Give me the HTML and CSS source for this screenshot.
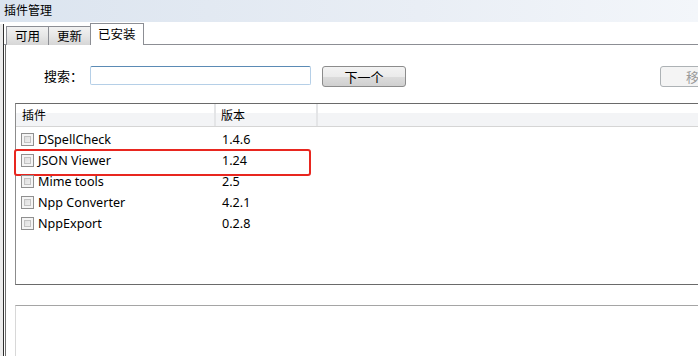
FILE: index.html
```html
<!DOCTYPE html>
<html>
<head>
  <meta charset="utf-8">
  <title>插件管理</title>
  <link rel="stylesheet" href="styles.css">
</head>
<body>
  <div class="titlebar">插件管理</div>

  <div class="dialog">
    <div class="tabctl">
      <div class="tabs">
        <div class="tab">可用</div>
        <div class="tab">更新</div>
        <div class="tab active">已安装</div>
      </div>

      <div class="page">
        <div class="search-row">
          <label class="search-label" for="search">搜索：</label>
          <input type="text" id="search" class="search-input">
          <button class="btn">下一个</button>
          <button class="btn disabled">移除</button>
        </div>

        <div class="listview">
          <div class="list-head">
            <div class="col-name">插件</div>
            <div class="col-ver">版本</div>
            <div class="col-rest"></div>
          </div>
          <ul class="rows">
            <li class="row"><span class="col-name"><span class="check"></span>DSpellCheck</span><span class="col-ver">1.4.6</span></li>
            <li class="row marked"><span class="col-name"><span class="check"></span>JSON Viewer</span><span class="col-ver">1.24</span></li>
            <li class="row"><span class="col-name"><span class="check"></span>Mime tools</span><span class="col-ver">2.5</span></li>
            <li class="row"><span class="col-name"><span class="check"></span>Npp Converter</span><span class="col-ver">4.2.1</span></li>
            <li class="row"><span class="col-name"><span class="check"></span>NppExport</span><span class="col-ver">0.2.8</span></li>
          </ul>
        </div>

        <div class="details"></div>
      </div>
    </div>
  </div>
</body>
</html>
```

FILE: styles.css
```css
* {
  margin: 0;
  padding: 0;
  box-sizing: border-box;
}

body {
  width: 698px;
  height: 356px;
  overflow: hidden;
  background: #fff;
  font-family: "Noto Sans", "Noto Sans CJK SC", sans-serif;
  font-size: 12px;
  color: #000;
}

.titlebar {
  height: 22px;
  line-height: 20px;
  padding-left: 4px;
  background: linear-gradient(to right, #dbe4ef, #e9eef5 60%, #f3f6fa);
  font-family: "Noto Sans CJK SC", sans-serif;
}

.dialog {
  width: 780px;
  margin-top: 2px;
  border-left: 3px solid #ececec;
}

.tabctl {
  border-left: 1px solid #2e2e2e;
}

/* tab strip */
.tabs {
  display: flex;
  align-items: flex-end;
  height: 21px;
  padding-left: 2px;
  border-bottom: 1px solid #8c8e94;
  font-family: "Noto Sans CJK SC", sans-serif;
}

.tab {
  height: 19px;
  line-height: 18px;
  padding: 0 8px;
  margin-bottom: -1px;
  border: 1px solid #8c8e94;
  border-bottom: none;
  background: linear-gradient(#f2f2f2, #e6e6e6 50%, #d6d6d6);
  font-size: 12.5px;
}

.tab + .tab {
  margin-left: -1px;
}

.tab.active {
  height: 22px;
  line-height: 20px;
  padding: 0 7px;
  background: #fff;
}

.page {
  margin-left: 1px;
  border-left: 1px solid #6e6e6e;
  padding-left: 9px;
  height: 320px;
}

/* search */
.search-row {
  display: flex;
  align-items: flex-start;
  padding-top: 21px;
  height: 58px;
}

.search-label {
  margin-left: 29px;
  margin-top: 1px;
  width: 46px;
  font-family: "Noto Sans CJK SC", sans-serif;
  font-size: 13px;
  line-height: 17px;
}

.search-input {
  width: 221px;
  height: 19px;
  border: 1px solid #b5cfe7;
  border-top-color: #5b8bb5;
  border-radius: 2px;
  outline: none;
}

.btn {
  height: 21px;
  width: 84px;
  margin-left: 11px;
  border: 1px solid #8c8c8c;
  border-radius: 3px;
  background: linear-gradient(#f3f3f3, #ebebeb 50%, #dcdcdc 51%, #d0d0d0);
  font-family: "Noto Sans CJK SC", sans-serif;
  font-size: 13px;
  line-height: 17px;
}

.btn.disabled {
  width: 60px;
  margin-left: 254px;
  padding-left: 25px;
  text-align: left;
  border-color: #adb2b5;
  background: #f4f4f4;
  color: #9a9a9a;
}

/* plugin list */
.listview {
  width: 760px;
  height: 182px;
  border: 1px solid #6a6a6a;
  border-left-color: #8c8c8c;
}

.list-head {
  display: flex;
  height: 23px;
  background: linear-gradient(#fff 40%, #f3f4f6 41%);
  border-bottom: 1px solid #d5d5d5;
  font-family: "Noto Sans CJK SC", sans-serif;
  line-height: 22px;
}

.list-head .col-name {
  width: 200px;
  padding-left: 6px;
  border-right: 2px solid #e4e5e7;
}

.list-head .col-ver {
  width: 102px;
  padding-left: 5px;
  border-right: 2px solid #e4e5e7;
}

.rows {
  list-style: none;
  padding-top: 2px;
  font-size: 12.6px;
}

.row {
  position: relative;
  display: flex;
  align-items: center;
  height: 21px;
}

.row .col-name {
  display: flex;
  align-items: center;
  width: 206px;
  padding-left: 5px;
}

.check {
  width: 13px;
  height: 13px;
  margin-right: 4px;
  border: 1px solid #8f8f8f;
  background: linear-gradient(135deg, #d6d6d6, #f6f6f6);
  box-shadow: inset 0 0 0 2px #f4f4f4, inset 0 0 0 3px #c2c2c2;
}

.row.marked::after {
  content: "";
  position: absolute;
  left: -2px;
  top: -1px;
  width: 293px;
  height: 23px;
  border: 2px solid #e8261f;
  border-radius: 3px;
}

.details {
  margin-top: 20px;
  width: 760px;
  height: 60px;
  border-top: 1px solid #a5a5a5;
  border-left: 1px solid #d8d8d8;
}
```
